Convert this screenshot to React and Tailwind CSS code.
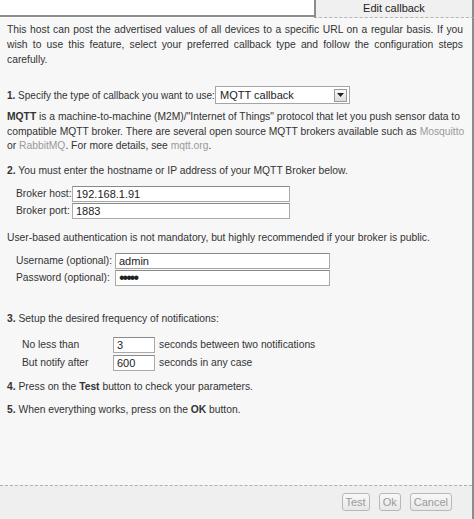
import React from 'react'

const inputCls = 'h-[16px] border border-[#a9a9a9] border-t-[#8a8a8a] bg-white px-[3px] text-[11px] leading-[14px] text-[#222] outline-none'

function Field({ label, value, labelW, inputW, type = 'text' }) {
  return (
    <div className="flex items-center">
      <span className="shrink-0 text-[#333]" style={{ width: labelW }}>{label}</span>
      <input type={type} defaultValue={value} className={inputCls + (type === 'password' ? ' text-[16px] tracking-[-2px]' : '')} style={{ width: inputW }} />
    </div>
  )
}

export default function App() {
  return (
    <div className="w-[474px] h-[519px] flex flex-col bg-white font-['Liberation_Sans',Arial,sans-serif] text-[10.3px] text-[#333] overflow-hidden">
      {/* Tab strip */}
      <div className="flex h-[18px] shrink-0">
        <div className="flex-1 h-[17px] border-b-2 border-[#8c8c8c]" />
        <div className="w-[160px] h-[18px] bg-[#f0f0f0] border-x-2 border-[#8c8c8c] border-b border-b-[#b5b5b5] border-dashed [border-left-style:solid] [border-right-style:solid] text-center text-[11px] leading-[16px] text-[#222]">
          Edit callback
        </div>
      </div>

      <div className="flex-1 flex flex-col bg-[#f7f7f7] border-r-2 border-[#8c8c8c]">
        {/* Body */}
        <div className="flex-1 px-[7px] pt-[4px] leading-[15px]">
          <p className="text-justify pr-[2px]">
            This host can post the advertised values of all devices to a specific URL on a regular basis. If you wish to use this feature, select your preferred callback type and follow the configuration steps carefully.
          </p>

          <div className="mt-[19px] flex items-center gap-[3px]">
            <span className="w-[205px] whitespace-nowrap text-[10px]"><b>1.</b> Specify the type of callback you want to use:</span>
            <div className="w-[135px] h-[18px] flex items-center justify-between border border-[#a5a5a5] bg-white pl-[4px] pr-[2px] text-[11px] text-[#222]">
              <span>MQTT callback</span>
              <span className="w-[13px] h-[13px] flex items-center justify-center border border-[#9a9a9a] bg-gradient-to-b from-[#fafafa] to-[#dcdcdc]">
                <svg width="7" height="4" viewBox="0 0 7 4"><path d="M0 0h7L3.5 4z" fill="#222" /></svg>
              </span>
            </div>
          </div>

          <p className="mt-[6px] leading-[14.5px]">
            <b>MQTT</b> is a machine-to-machine (M2M)/"Internet of Things" protocol that let you push sensor data to compatible MQTT broker. There are several open source MQTT brokers available such as <span className="text-[#9a9a9a]">Mosquitto</span> or <span className="text-[#9a9a9a]">RabbitMQ</span>. For more details, see <span className="text-[#9a9a9a]">mqtt.org</span>.
          </p>

          <p className="mt-[9px]"><b>2.</b> You must enter the hostname or IP address of your MQTT Broker below.</p>

          <div className="mt-[8px] pl-[9px] flex flex-col gap-[1px]">
            <Field label="Broker host:" value="192.168.1.91" labelW={56} inputW={218} />
            <Field label="Broker port:" value="1883" labelW={56} inputW={218} />
          </div>

          <p className="mt-[11px]">User-based authentication is not mandatory, but highly recommended if your broker is public.</p>

          <div className="mt-[8px] pl-[9px] flex flex-col gap-[1px]">
            <Field label="Username (optional):" value="admin" labelW={99} inputW={215} />
            <Field label="Password (optional):" value="admin" labelW={99} inputW={215} type="password" />
          </div>

          <p className="mt-[25px]"><b>3.</b> Setup the desired frequency of notifications:</p>

          <div className="mt-[11px] pl-[15px] flex flex-col gap-[2px]">
            <div className="flex items-center">
              <span className="w-[91px]">No less than</span>
              <input defaultValue="3" className={inputCls + ' w-[42px]'} />
              <span className="ml-[4px]">seconds between two notifications</span>
            </div>
            <div className="flex items-center">
              <span className="w-[91px]">But notify after</span>
              <input defaultValue="600" className={inputCls + ' w-[42px]'} />
              <span className="ml-[4px]">seconds in any case</span>
            </div>
          </div>

          <p className="mt-[8px]"><b>4.</b> Press on the <b>Test</b> button to check your parameters.</p>
          <p className="mt-[8px]"><b>5.</b> When everything works, press on the <b>OK</b> button.</p>
        </div>

        {/* Footer */}
        <div className="h-[34px] shrink-0 border-t border-dashed border-[#b0b0b0] bg-[#efefef] flex items-center justify-end gap-[9px] pr-[20px] pb-[2px]">
          {['Test', 'Ok', 'Cancel'].map(t => (
            <button key={t} disabled className="h-[18px] px-[3px] rounded-[3px] border border-[#b8b8b8] bg-gradient-to-b from-[#f8f8f8] to-[#e8e8e8] text-[11px] leading-[16px] text-[#9a9a9a]">
              {t}
            </button>
          ))}
        </div>
      </div>
    </div>
  )
}
